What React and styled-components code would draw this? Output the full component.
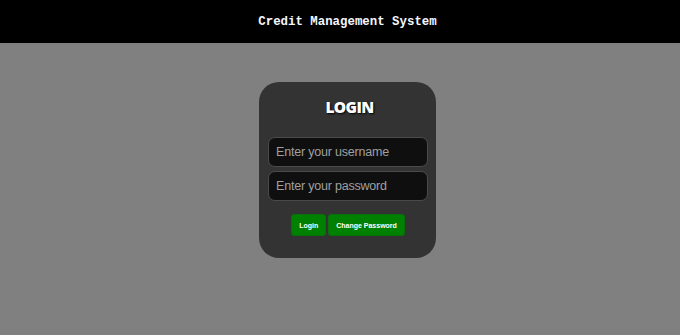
import styled, { createGlobalStyle } from "styled-components";

const GlobalStyle = createGlobalStyle`
  html, body {
    margin: 0;
    padding: 0;
    background: #808080;
  }
  body {
    font-family: "Liberation Sans", Arial, sans-serif;
  }
`;

const Header = styled.header`
  height: 43px;
  padding-left: 15px;
  background: #000;
  display: flex;
  align-items: center;
  justify-content: center;
`;

const Title = styled.h1`
  margin: 0;
  color: #f4f6ff;
  font-family: "Liberation Mono", "Courier New", monospace;
  font-size: 12.4px;
  font-weight: bold;
`;

const Main = styled.main`
  display: flex;
  justify-content: center;
  padding: 39px 0 0 15px;
`;

const Card = styled.div`
  width: 177px;
  height: 176px;
  box-sizing: border-box;
  background: #333;
  border-radius: 20px;
  padding: 14px 8px 0 9px;
  display: flex;
  flex-direction: column;
  align-items: center;
`;

const CardTitle = styled.h2`
  margin: 0 0 19px;
  padding-left: 3px;
  color: #fff;
  font-family: "Open Sans", "Liberation Sans", sans-serif;
  font-size: 15.5px;
  font-weight: 800;
  letter-spacing: -0.6px;
  text-shadow: 1px 1px 2px #000;
  line-height: 22px;
`;

const Input = styled.input`
  width: 100%;
  height: 30px;
  box-sizing: border-box;
  margin-bottom: 4px;
  padding: 0 7px;
  background: #0f0f0f;
  border: 1px solid #4a4a4a;
  border-radius: 7px;
  color: #ddd;
  font-family: "Liberation Sans", Arial, sans-serif;
  font-size: 12.5px;
  letter-spacing: -0.2px;
  outline: none;

  &::placeholder {
    color: #a0a0a0;
  }
`;

const Actions = styled.div`
  display: flex;
  gap: 2px;
  margin-top: 9px;
`;

const Button = styled.button`
  height: 22px;
  padding: 0 7px;
  background: #008000;
  color: #fff;
  border: 1px solid #0a6e0a;
  border-radius: 3px;
  font-family: "Liberation Sans", Arial, sans-serif;
  font-size: 7px;
  font-weight: bold;
  cursor: pointer;
`;

export default function App() {
  return (
    <>
      <GlobalStyle />
      <Header>
        <Title>Credit Management System</Title>
      </Header>
      <Main>
        <Card>
          <CardTitle>LOGIN</CardTitle>
          <Input placeholder="Enter your username" />
          <Input type="password" placeholder="Enter your password" />
          <Actions>
            <Button>Login</Button>
            <Button>Change Password</Button>
          </Actions>
        </Card>
      </Main>
    </>
  );
}
